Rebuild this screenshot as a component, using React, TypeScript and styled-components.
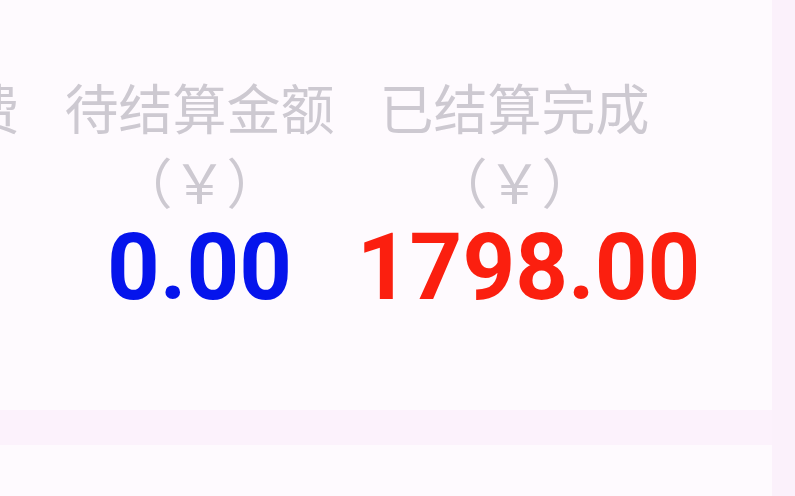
import React from 'react';
import styled, {createGlobalStyle} from 'styled-components';

const GlobalStyle = createGlobalStyle`
    html, body {
        margin: 0;
        padding: 0;
        background: #fbf1fb;
        overflow: hidden;
    }
`;

interface Stat {
    label: string;
    value?: string;
    color?: string;
    shift?: number;
}

// the first column sits mostly off screen: only the tail of its label peeks in
const stats: Stat[] = [
    {label: '累计手续费'},
    {label: '待结算金额', value: '0.00', color: '#0514ec'},
    {label: '已结算完成', value: '1798.00', color: '#fb1f0f', shift: 28},
];

const App: React.FC = () => {
    return (
        <>
            <GlobalStyle/>
            <Screen>
                <Main>
                    <SummaryCard>
                        <StatRow>
                            {stats.map((s) => (
                                <StatColumn key={s.label}>
                                    <Label>{s.label}</Label>
                                    {s.value && (
                                        <>
                                            <Label>（￥）</Label>
                                            <Value $color={s.color ?? '#333'} $shift={s.shift ?? 0}>
                                                {s.value}
                                            </Value>
                                        </>
                                    )}
                                </StatColumn>
                            ))}
                        </StatRow>
                    </SummaryCard>
                    <Divider/>
                    <NextCard/>
                </Main>
                <SideStrip/>
            </Screen>
        </>
    );
};

export default App;

const Screen = styled.div`
    display: flex;
    width: 795px;
    height: 496px;
    overflow: hidden;
`;

const Main = styled.div`
    width: 772px;
    display: flex;
    flex-direction: column;
`;

const SideStrip = styled.div`
    flex: 1;
    background: #fbf1fb;
`;

const SummaryCard = styled.div`
    height: 410px;
    box-sizing: border-box;
    padding-top: 70px;
    background: #fefafe;
    overflow: hidden;
`;

const StatRow = styled.div`
    display: flex;
    margin-left: -273px;
`;

const StatColumn = styled.div`
    width: 315px;
    flex-shrink: 0;
    display: flex;
    flex-direction: column;
    align-items: center;
`;

const Label = styled.div`
    font-family: "Noto Sans CJK SC", "Noto Sans", sans-serif;
    font-size: 54px;
    line-height: 74px;
    color: #cdc9d1;
    white-space: nowrap;
`;

const Value = styled.div<{ $color: string; $shift: number }>`
    margin-top: 4px;
    padding-left: ${(p) => p.$shift}px;
    font-family: Roboto, "Liberation Sans", sans-serif;
    font-weight: 700;
    font-size: 92px;
    line-height: 92px;
    color: ${(p) => p.$color};
    white-space: nowrap;
`;

const Divider = styled.div`
    height: 35px;
    background: #fcf2fc;
`;

const NextCard = styled.div`
    flex: 1;
    background: #fefafe;
`;
